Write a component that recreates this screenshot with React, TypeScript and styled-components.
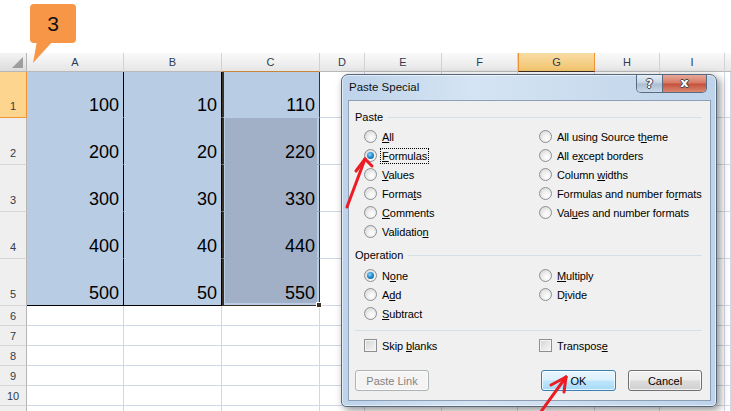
import React from "react"
import styled, { createGlobalStyle, css } from "styled-components"

const GlobalStyle = createGlobalStyle`
  html, body {
    margin: 0;
    padding: 0;
    background: #fff;
  }
  body {
    overflow: hidden;
    font-family: "Liberation Sans", Arial, sans-serif;
  }
`

const GRID = "#d0d7e5"
const SEL = "#b8cce4"
const SEL_DARK = "#a1b0c7"
const EDGE = "#3a3024"
const ORANGE = "#f29436"

const colWidths = [27, 97, 98, 98, 45, 77, 76, 77, 65, 65, 6]
const rowHeights = [46, 47, 47, 47, 47, 20, 20, 20, 20, 20, 20]
const colNames = ["A", "B", "C", "D", "E", "F", "G", "H", "I", ""]
const values = [
  [100, 10, 110],
  [200, 20, 220],
  [300, 30, 330],
  [400, 40, 440],
  [500, 50, 550],
]

type Option = { text: string; at: number; checked?: boolean; focus?: boolean }

const pasteLeft: Option[] = [
  { text: "All", at: 0 },
  { text: "Formulas", at: 0, checked: true, focus: true },
  { text: "Values", at: 0 },
  { text: "Formats", at: 5 },
  { text: "Comments", at: 0 },
  { text: "Validation", at: 9 },
]
const pasteRight: Option[] = [
  { text: "All using Source theme", at: 18 },
  { text: "All except borders", at: 5 },
  { text: "Column widths", at: 7 },
  { text: "Formulas and number formats", at: 22 },
  { text: "Values and number formats", at: 3 },
]
const opLeft: Option[] = [
  { text: "None", at: 1, checked: true },
  { text: "Add", at: 1 },
  { text: "Subtract", at: 0 },
]
const opRight: Option[] = [
  { text: "Multiply", at: 0 },
  { text: "Divide", at: 1 },
]

const Accel = ({ text, at }: { text: string; at: number }) => (
  <>
    {text.slice(0, at)}
    <u>{text.charAt(at)}</u>
    {text.slice(at + 1)}
  </>
)

const App = () => {
  const cells: React.ReactNode[] = []

  cells.push(<Corner key="corner" />)
  colNames.forEach((name, i) => {
    cells.push(
      <ColHeader key={"h" + i} $active={name === "G"} $copied={name === "C"} $last={i === colNames.length - 1}>
        {name}
      </ColHeader>
    )
  })

  rowHeights.forEach((_, r) => {
    const row = r + 1
    cells.push(
      <RowHeader key={"r" + row} $active={row === 1} $tall={row <= 5}>
        {row <= 10 ? row : ""}
      </RowHeader>
    )
    colNames.forEach((_, c) => {
      const inData = row <= 5 && c <= 2
      if (!inData) {
        cells.push(<Cell key={row + "-" + c} />)
        return
      }
      const v = values[row - 1][c]
      if (c < 2) {
        cells.push(
          <Cell key={row + "-" + c} $bg={SEL} $right="#000" $bottom={row === 5 ? "#000" : "transparent"}>
            {v}
          </Cell>
        )
      } else {
        cells.push(
          <CopyCell key={row + "-" + c} $dark={row > 1} $lastRow={row === 5}>
            {v}
          </CopyCell>
        )
      }
    })
  })

  return (
    <Page>
      <GlobalStyle />
      <TopBand />
      <Sheet>{cells}</Sheet>

      <Callout>3</Callout>

      <Dialog>
        <TitleBar>
          <Title>Paste Special</Title>
          <CaptionButtons>
            <HelpButton>?</HelpButton>
            <CloseButton>x</CloseButton>
          </CaptionButtons>
        </TitleBar>
        <Content>
          <GroupHeader>Paste</GroupHeader>
          <OptionGrid>
            <OptionColumn>
              {pasteLeft.map((o) => (
                <OptionRow key={o.text}>
                  <Radio $checked={!!o.checked} />
                  <OptionLabel $focus={!!o.focus}>
                    <Accel text={o.text} at={o.at} />
                  </OptionLabel>
                </OptionRow>
              ))}
            </OptionColumn>
            <OptionColumn>
              {pasteRight.map((o) => (
                <OptionRow key={o.text}>
                  <Radio $checked={!!o.checked} />
                  <OptionLabel>
                    <Accel text={o.text} at={o.at} />
                  </OptionLabel>
                </OptionRow>
              ))}
            </OptionColumn>
          </OptionGrid>

          <GroupHeader $spaced>Operation</GroupHeader>
          <OptionGrid $gap={4}>
            <OptionColumn>
              {opLeft.map((o) => (
                <OptionRow key={o.text}>
                  <Radio $checked={!!o.checked} />
                  <OptionLabel>
                    <Accel text={o.text} at={o.at} />
                  </OptionLabel>
                </OptionRow>
              ))}
            </OptionColumn>
            <OptionColumn>
              {opRight.map((o) => (
                <OptionRow key={o.text}>
                  <Radio $checked={false} />
                  <OptionLabel>
                    <Accel text={o.text} at={o.at} />
                  </OptionLabel>
                </OptionRow>
              ))}
            </OptionColumn>
          </OptionGrid>

          <Separator />

          <OptionGrid $gap={0}>
            <OptionRow>
              <Checkbox />
              <OptionLabel>
                <Accel text="Skip blanks" at={5} />
              </OptionLabel>
            </OptionRow>
            <OptionRow>
              <Checkbox />
              <OptionLabel>
                <Accel text="Transpose" at={8} />
              </OptionLabel>
            </OptionRow>
          </OptionGrid>

          <ButtonRow>
            <Button $variant="disabled">Paste Link</Button>
            <ButtonGroup>
              <Button $variant="default" $width={75}>OK</Button>
              <Button>Cancel</Button>
            </ButtonGroup>
          </ButtonRow>
        </Content>
      </Dialog>

      <Annotations width="731" height="411" viewBox="0 0 731 411">
        <g stroke="#ec1c24" strokeWidth="3" strokeLinecap="round" strokeLinejoin="round" fill="none">
          <path d="M347 207 L365 159" />
          <path d="M365 159 L356 171" />
          <path d="M365 159 L372 166" />
          <path d="M540 413 L566 377" />
          <path d="M566 377 L551 385" />
          <path d="M566 377 L564 392" />
        </g>
      </Annotations>
    </Page>
  )
}

const Page = styled.div`
  position: relative;
  width: 731px;
  height: 411px;
  overflow: hidden;
  display: flex;
  flex-direction: column;
  background: #fff;
`

const TopBand = styled.div`
  height: 53px;
  flex-shrink: 0;
`

const Sheet = styled.div`
  display: grid;
  grid-template-columns: ${colWidths.map((w) => w + "px").join(" ")};
  grid-template-rows: 19px ${rowHeights.map((h) => h + "px").join(" ")};
  font-family: "Liberation Sans", Arial, sans-serif;
`

const Corner = styled.div`
  position: relative;
  box-sizing: border-box;
  background: linear-gradient(#f4f4f4, #dcdcdc);
  border-right: 1px solid #b5b5b5;
  border-bottom: 1px solid #b5b5b5;

  &::after {
    content: "";
    position: absolute;
    right: 3px;
    bottom: 3px;
    border-left: 11px solid transparent;
    border-bottom: 11px solid #9d9d9d;
  }
`

const ColHeader = styled.div<{ $active: boolean; $copied: boolean; $last: boolean }>`
  box-sizing: border-box;
  display: flex;
  align-items: center;
  justify-content: center;
  font-size: 11px;
  color: #2c3d52;
  background: linear-gradient(#fafafa, #e6e6e6);
  border-right: 1px solid #d2d2d2;
  border-bottom: 1px solid #b9b9b9;

  ${(p) =>
    p.$active &&
    css`
      background: linear-gradient(#f9dca6, #f1c46c);
      border-right-color: ${ORANGE};
      border-left: 1px solid ${ORANGE};
      border-bottom-color: ${EDGE};
    `}
  ${(p) => p.$copied && css`border-bottom-color: #c9853a;`}
  ${(p) => p.$last && css`border-right: none;`}
`

const RowHeader = styled.div<{ $active: boolean; $tall: boolean }>`
  box-sizing: border-box;
  display: flex;
  align-items: flex-end;
  justify-content: center;
  padding-bottom: ${(p) => (p.$tall ? 4 : 2)}px;
  font-size: 11px;
  line-height: 13px;
  color: #333b46;
  background: ${(p) => (p.$active ? "#fdd58f" : "#efefef")};
  border-right: 1px solid ${(p) => (p.$active ? ORANGE : "#b5b5b5")};
  border-bottom: 1px solid ${(p) => (p.$active ? ORANGE : "#d6d6d6")};
`

const Cell = styled.div<{ $bg?: string; $right?: string; $bottom?: string }>`
  box-sizing: border-box;
  display: flex;
  align-items: flex-end;
  justify-content: flex-end;
  padding: 0 4px 3px 0;
  font-size: 18px;
  line-height: 18px;
  color: #000;
  background: ${(p) => p.$bg || "#fff"};
  border-right: 1px solid ${(p) => p.$right || GRID};
  border-bottom: 1px solid ${(p) => p.$bottom || GRID};
`

const CopyCell = styled(Cell)<{ $dark: boolean; $lastRow: boolean }>`
  position: relative;
  background: ${(p) => (p.$dark ? SEL_DARK : SEL)};
  border-left: 2px solid ${EDGE};
  border-right: 1px solid ${EDGE};
  border-bottom: 1px solid ${(p) => (p.$lastRow ? EDGE : "transparent")};
  box-shadow: ${(p) =>
    p.$dark
      ? `inset 1px 0 0 ${SEL}, inset -2px 0 0 ${SEL}${p.$lastRow ? `, inset 0 -2px 0 ${SEL}` : ""}`
      : "none"};

  ${(p) =>
    p.$lastRow &&
    css`
      &::after {
        content: "";
        position: absolute;
        right: -3px;
        bottom: -3px;
        width: 4px;
        height: 4px;
        background: ${EDGE};
        border: 1px solid #fff;
      }
    `}
`

const Callout = styled.div`
  position: absolute;
  left: 30px;
  top: 4px;
  width: 46px;
  height: 39px;
  border-radius: 4px;
  background: #f79646;
  display: flex;
  align-items: center;
  justify-content: center;
  font-family: "Liberation Sans", Arial, sans-serif;
  font-size: 21px;
  color: #111;

  &::after {
    content: "";
    position: absolute;
    left: 0;
    top: 37px;
    width: 25px;
    height: 24px;
    background: #f79646;
    clip-path: polygon(7px 0, 23px 0, 3px 22px);
  }
`

const Dialog = styled.div`
  position: absolute;
  left: 341px;
  top: 74px;
  width: 376px;
  height: 333px;
  box-sizing: border-box;
  display: flex;
  flex-direction: column;
  border: 1px solid #55687e;
  border-radius: 7px 7px 5px 5px;
  background: linear-gradient(90deg, #bdd3ea 0%, #d5e4f3 35%, #cadcee 65%, #bed4eb 100%);
  box-shadow: inset 0 0 0 1px rgba(255, 255, 255, 0.55), 3px 3px 9px rgba(0, 0, 0, 0.45);
  font-family: "Liberation Sans", Arial, sans-serif;
  font-size: 11px;
  color: #000;
`

const TitleBar = styled.div`
  height: 25px;
  flex-shrink: 0;
  display: flex;
  justify-content: space-between;
  align-items: flex-start;
  padding: 0 9px 0 7px;
`

const Title = styled.div`
  line-height: 25px;
  font-size: 11.5px;
  color: #111;
`

const CaptionButtons = styled.div`
  display: flex;
  height: 17px;
  border: 1px solid #5a6c81;
  border-top: none;
  border-radius: 0 0 5px 5px;
  overflow: hidden;
`

const captionGlyph = css`
  display: flex;
  align-items: center;
  justify-content: center;
  font-family: "DejaVu Sans", sans-serif;
  font-weight: bold;
  color: #fff;
  text-shadow: 1px 0 0 #3b4350, -1px 0 0 #3b4350, 0 1px 0 #3b4350, 0 -1px 0 #3b4350;
`

const HelpButton = styled.div`
  ${captionGlyph};
  width: 25px;
  font-size: 12px;
  border-right: 1px solid #5a6c81;
  background: linear-gradient(#e6eef6 0%, #c3d2e2 48%, #a9bcd1 52%, #c9d9e9 100%);
`

const CloseButton = styled.div`
  ${captionGlyph};
  width: 43px;
  font-size: 13px;
  padding-bottom: 2px;
  box-sizing: border-box;
  background: linear-gradient(#e9a898 0%, #d67863 48%, #c5503a 52%, #d98771 100%);
`

const Content = styled.div`
  flex: 1;
  display: flex;
  flex-direction: column;
  margin: 0 5px 5px 6px;
  padding: 9px 8px 0 6px;
  border: 1px solid #8c9fb5;
  background: #f0f0f0;
`

const GroupHeader = styled.div<{ $spaced?: boolean }>`
  display: flex;
  align-items: center;
  gap: 5px;
  height: 14px;
  margin-top: ${(p) => (p.$spaced ? 7 : 0)}px;

  &::after {
    content: "";
    flex: 1;
    height: 1px;
    background: #d5dfe6;
  }
`

const OptionGrid = styled.div<{ $gap?: number }>`
  display: grid;
  grid-template-columns: 175px 1fr;
  margin: ${(p) => (p.$gap ?? 3)}px 0 0 9px;
`

const OptionColumn = styled.div`
  display: flex;
  flex-direction: column;
`

const OptionRow = styled.div`
  height: 19px;
  display: flex;
  align-items: center;
  gap: 4px;
  white-space: nowrap;
`

const OptionLabel = styled.span<{ $focus?: boolean }>`
  line-height: 14px;
  padding: 0 1px;
  margin-left: -1px;
  letter-spacing: -0.1px;
  white-space: nowrap;
  border: 1px solid transparent;
  ${(p) => p.$focus && css`border: 1px dotted #000;`}
`

const Radio = styled.span<{ $checked: boolean }>`
  position: relative;
  width: 11px;
  height: 11px;
  flex-shrink: 0;
  border-radius: 50%;
  border: 1px solid #8d8f91;
  background: radial-gradient(circle at 62% 66%, #ffffff 0%, #f2f2f2 35%, #cfd0d1 100%);

  ${(p) =>
    p.$checked &&
    css`
      &::after {
        content: "";
        position: absolute;
        left: 2px;
        top: 2px;
        width: 7px;
        height: 7px;
        border-radius: 50%;
        background: radial-gradient(circle at 40% 35%, #8ad9ff 0%, #2a8fd0 45%, #0c4f8a 100%);
      }
    `}
`

const Checkbox = styled.span`
  width: 11px;
  height: 11px;
  flex-shrink: 0;
  border: 1px solid #8e8f8f;
  background: linear-gradient(135deg, #d4d4d4, #f8f8f8);
  box-shadow: inset 0 0 0 1px #f4f4f4;
`

const Separator = styled.div`
  height: 1px;
  background: #d5dfe6;
  margin: 7px 0 5px;
`

const ButtonRow = styled.div`
  display: flex;
  justify-content: space-between;
  margin-top: 15px;
`

const ButtonGroup = styled.div`
  display: flex;
  gap: 12px;
`

const Button = styled.div<{ $variant?: "default" | "disabled"; $width?: number }>`
  box-sizing: border-box;
  width: ${(p) => p.$width || 74}px;
  height: 21px;
  display: flex;
  align-items: center;
  justify-content: center;
  border-radius: 3px;
  border: 1px solid #707070;
  background: linear-gradient(#f2f2f2 0%, #ebebeb 48%, #dddddd 52%, #cfcfcf 100%);
  box-shadow: inset 0 0 0 1px rgba(255, 255, 255, 0.7);
  color: #000;

  ${(p) =>
    p.$variant === "default" &&
    css`
      border-color: #3c7fb1;
      background: linear-gradient(#eaf6fd 0%, #d9f0fc 48%, #bee6fd 52%, #a7d9f5 100%);
    `}
  ${(p) =>
    p.$variant === "disabled" &&
    css`
      border-color: #adb2b5;
      background: #f4f4f4;
      color: #838383;
    `}
`

const Annotations = styled.svg`
  position: absolute;
  left: 0;
  top: 0;
  pointer-events: none;
`

export default App
